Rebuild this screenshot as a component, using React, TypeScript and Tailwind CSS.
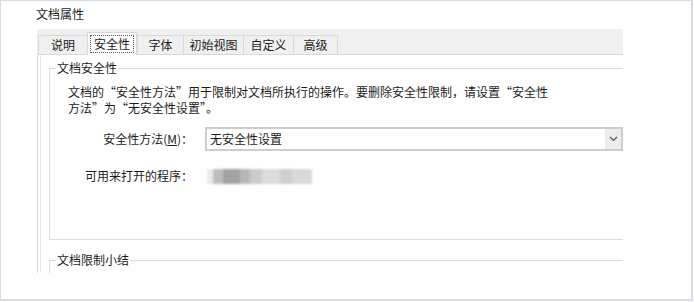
import React from "react";

const tabs = [
  { label: "说明", w: "w-[49px]" },
  { label: "安全性", w: "w-[50px]", active: true },
  { label: "字体", w: "w-[46px]" },
  { label: "初始视图", w: "w-[60px]" },
  { label: "自定义", w: "w-[50px]" },
  { label: "高级", w: "w-[45px]" },
];

const blurBlocks = [
  "w-[6px] bg-[#efe9e9]",
  "w-[10px] bg-[#bdbdbd]",
  "w-[17px] bg-[#a3a3a3]",
  "w-[10px] bg-[#b8b8b8]",
  "w-[12px] bg-[#cbcbcb]",
  "w-[18px] bg-[#dcdcdc]",
  "w-[12px] bg-[#cfcfcf]",
  "w-[20px] bg-[#d9d9d9]",
];

const App = () => {
  return (
    <div className="w-[694px] h-[302px] bg-white">
      <div className="w-[693px] h-[301px] bg-white border-t border-l border-r-2 border-b-2 border-[#d8dce1] pl-[35px] pt-[5px] text-[12px] leading-[16px] text-[#1c1c1c] font-['Noto_Sans_CJK_SC','Noto_Sans',sans-serif]">
        {/* Window title */}
        <div className="h-[16px]">文档属性</div>

        {/* Dialog (cropped) */}
        <div className="mt-[7px] ml-[1px] w-[586px] h-[244px] flex flex-col overflow-hidden">
          {/* Tab strip */}
          <div className="h-[25px] shrink-0 bg-[#f0f0f0] flex items-end pl-[1px]">
            {tabs.map((t) =>
              t.active ? (
                <div
                  key={t.label}
                  className={`${t.w} h-[23px] -mb-px relative z-10 bg-white border-t border-l border-r border-[#d9d9d9] flex items-start justify-center pt-[2px]`}
                >
                  <span className="px-[3px] border border-dotted border-[#555]">{t.label}</span>
                </div>
              ) : (
                <div
                  key={t.label}
                  className={`${t.w} h-[19px] border-t border-l border-[#d9d9d9] last:border-r flex items-center justify-center`}
                >
                  {t.label}
                </div>
              )
            )}
          </div>

          {/* Tab pane */}
          <div className="flex-1 bg-white border-t border-l border-[#d9d9d9] shadow-[inset_2px_0_0_#fff,inset_3px_0_0_#e6e6e6] pl-[11px]">
            <fieldset className="mt-[5px] w-[600px] h-[180px] border border-[#dcdcdc] pl-[18px]">
              <legend className="-ml-[12px] px-[1px]">文档安全性</legend>
              <p className="mt-[8px]">
                文档的“安全性方法”用于限制对文档所执行的操作。要删除安全性限制，请设置“安全性
                <br />
                方法”为“无安全性设置”。
              </p>

              <div className="mt-[11px] flex items-center">
                <div className="w-[125px] text-right">
                  安全性方法(<span className="underline">M</span>)：
                </div>
                <div className="ml-[12px] w-[418px] h-[24px] border-2 border-[#cdcdcd] bg-white flex items-center">
                  <span className="flex-1 pl-[3px]">无安全性设置</span>
                  <div className="w-[16px] h-full bg-[#ececec] flex items-center justify-center">
                    <svg width="9" height="6" viewBox="0 0 9 6" fill="none">
                      <path d="M1 1l3.5 3.5L8 1" stroke="#555" strokeWidth="1.2" />
                    </svg>
                  </div>
                </div>
              </div>

              <div className="mt-[17px] flex items-center">
                <div className="w-[125px] text-right">可用来打开的程序：</div>
                <div className="ml-[14px] h-[15px] flex blur-[1px]">
                  {blurBlocks.map((b, i) => (
                    <div key={i} className={`${b} h-full`} />
                  ))}
                </div>
              </div>
            </fieldset>

            <fieldset className="mt-[12px] w-[600px] h-[60px] border border-[#dcdcdc] pl-[18px]">
              <legend className="-ml-[12px] px-[1px]">文档限制小结</legend>
            </fieldset>
          </div>
        </div>
      </div>
    </div>
  );
};

export default App;
